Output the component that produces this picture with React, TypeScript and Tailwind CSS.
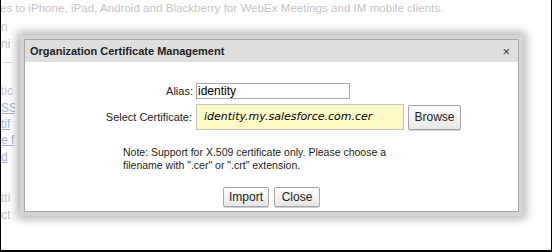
import React from "react";

const font = { fontFamily: '"Liberation Sans", Arial, sans-serif' };

function BgPage() {
  return (
    <div className="text-[12px] leading-[14px] text-[#c4c4c4]" style={font}>
      <div className="h-[17px] pt-[1px] -ml-[1px] whitespace-nowrap text-[11.6px]">
        es to iPhone, iPad, Android and Blackberry for WebEx Meetings and IM mobile clients.
      </div>
      <div className="w-[14px] overflow-hidden whitespace-nowrap">
        <div className="mt-[3px] h-[17px]">n</div>
        <div className="h-[17px]">ni</div>
        <div className="mt-[8px] ml-[2px] w-[10px] border-t border-[#dcdcdc]" />
        <div className="mt-[21px] h-[17px]">tic</div>
        <div className="h-[16px] text-[#a9afe6] underline">SS</div>
        <div className="h-[16px] text-[#a9afe6] underline">tif</div>
        <div className="h-[17px] text-[#a9afe6] underline">e f</div>
        <div className="h-[17px] text-[#a9afe6] underline">d</div>
        <div className="mt-[24px] h-[17px]">tti</div>
        <div className="h-[17px]">ct :</div>
      </div>
    </div>
  );
}

function Btn({ children, w }: { children: React.ReactNode; w: string }) {
  return (
    <button
      className={`${w} h-full rounded-[2px] border border-[#a6a6a6] bg-gradient-to-b from-[#ffffff] to-[#e6e6e6] text-[12px] text-[#222] shadow-[0_1px_0_#d0d0d0]`}
      style={font}
    >
      {children}
    </button>
  );
}

export default function App() {
  return (
    <div className="relative h-[252px] w-[552px] overflow-hidden border-x border-b-2 border-black bg-white">
      <BgPage />

      <div className="absolute left-[19px] top-[35px] w-[503px] bg-[#d4d4d4] p-[4px] shadow-[0_0_9px_3px_rgba(0,0,0,0.3)]">
        <div className="border border-[#a8a8a8] bg-white" style={font}>
          <div className="flex h-[22px] items-center justify-between bg-[#dedede] pl-[5px] pr-[8px]">
            <span className="text-[11px] font-bold text-[#222]">Organization Certificate Management</span>
            <span className="text-[13px] leading-none text-[#333]">×</span>
          </div>

          <div className="pb-[4px] pt-[21px] text-[11px] text-[#222]">
            <div className="flex h-[16px] items-center">
              <div className="w-[168px] text-right">Alias:</div>
              <div className="ml-[3px] flex h-[16px] w-[154px] items-center border border-[#aaa] pl-[1px] text-[12px] text-black">
                identity
              </div>
            </div>

            <div className="mt-[5px] flex h-[26px] items-center">
              <div className="w-[167px] text-right">Select Certificate:</div>
              <div
                className="ml-[4px] flex h-[26px] w-[208px] items-center border border-[#c6c6b4] bg-[#fefac8] pl-[7px] text-[11px] italic text-black"
                style={{ fontFamily: '"DejaVu Sans", Verdana, sans-serif' }}
              >
                identity.my.salesforce.com.cer
              </div>
              <div className="ml-[4px] h-[25px]">
                <Btn w="w-[53px]">Browse</Btn>
              </div>
            </div>

            <div className="ml-[98px] mt-[16px] text-[10.5px] leading-[13px] text-[#222]">
              Note: Support for X.509 certificate only. Please choose a
              <br />
              filename with ".cer" or ".crt" extension.
            </div>

            <div className="mt-[15px] flex h-[20px] justify-center gap-[5px]">
              <Btn w="w-[46px]">Import</Btn>
              <Btn w="w-[46px]">Close</Btn>
            </div>
          </div>
        </div>
      </div>
    </div>
  );
}
